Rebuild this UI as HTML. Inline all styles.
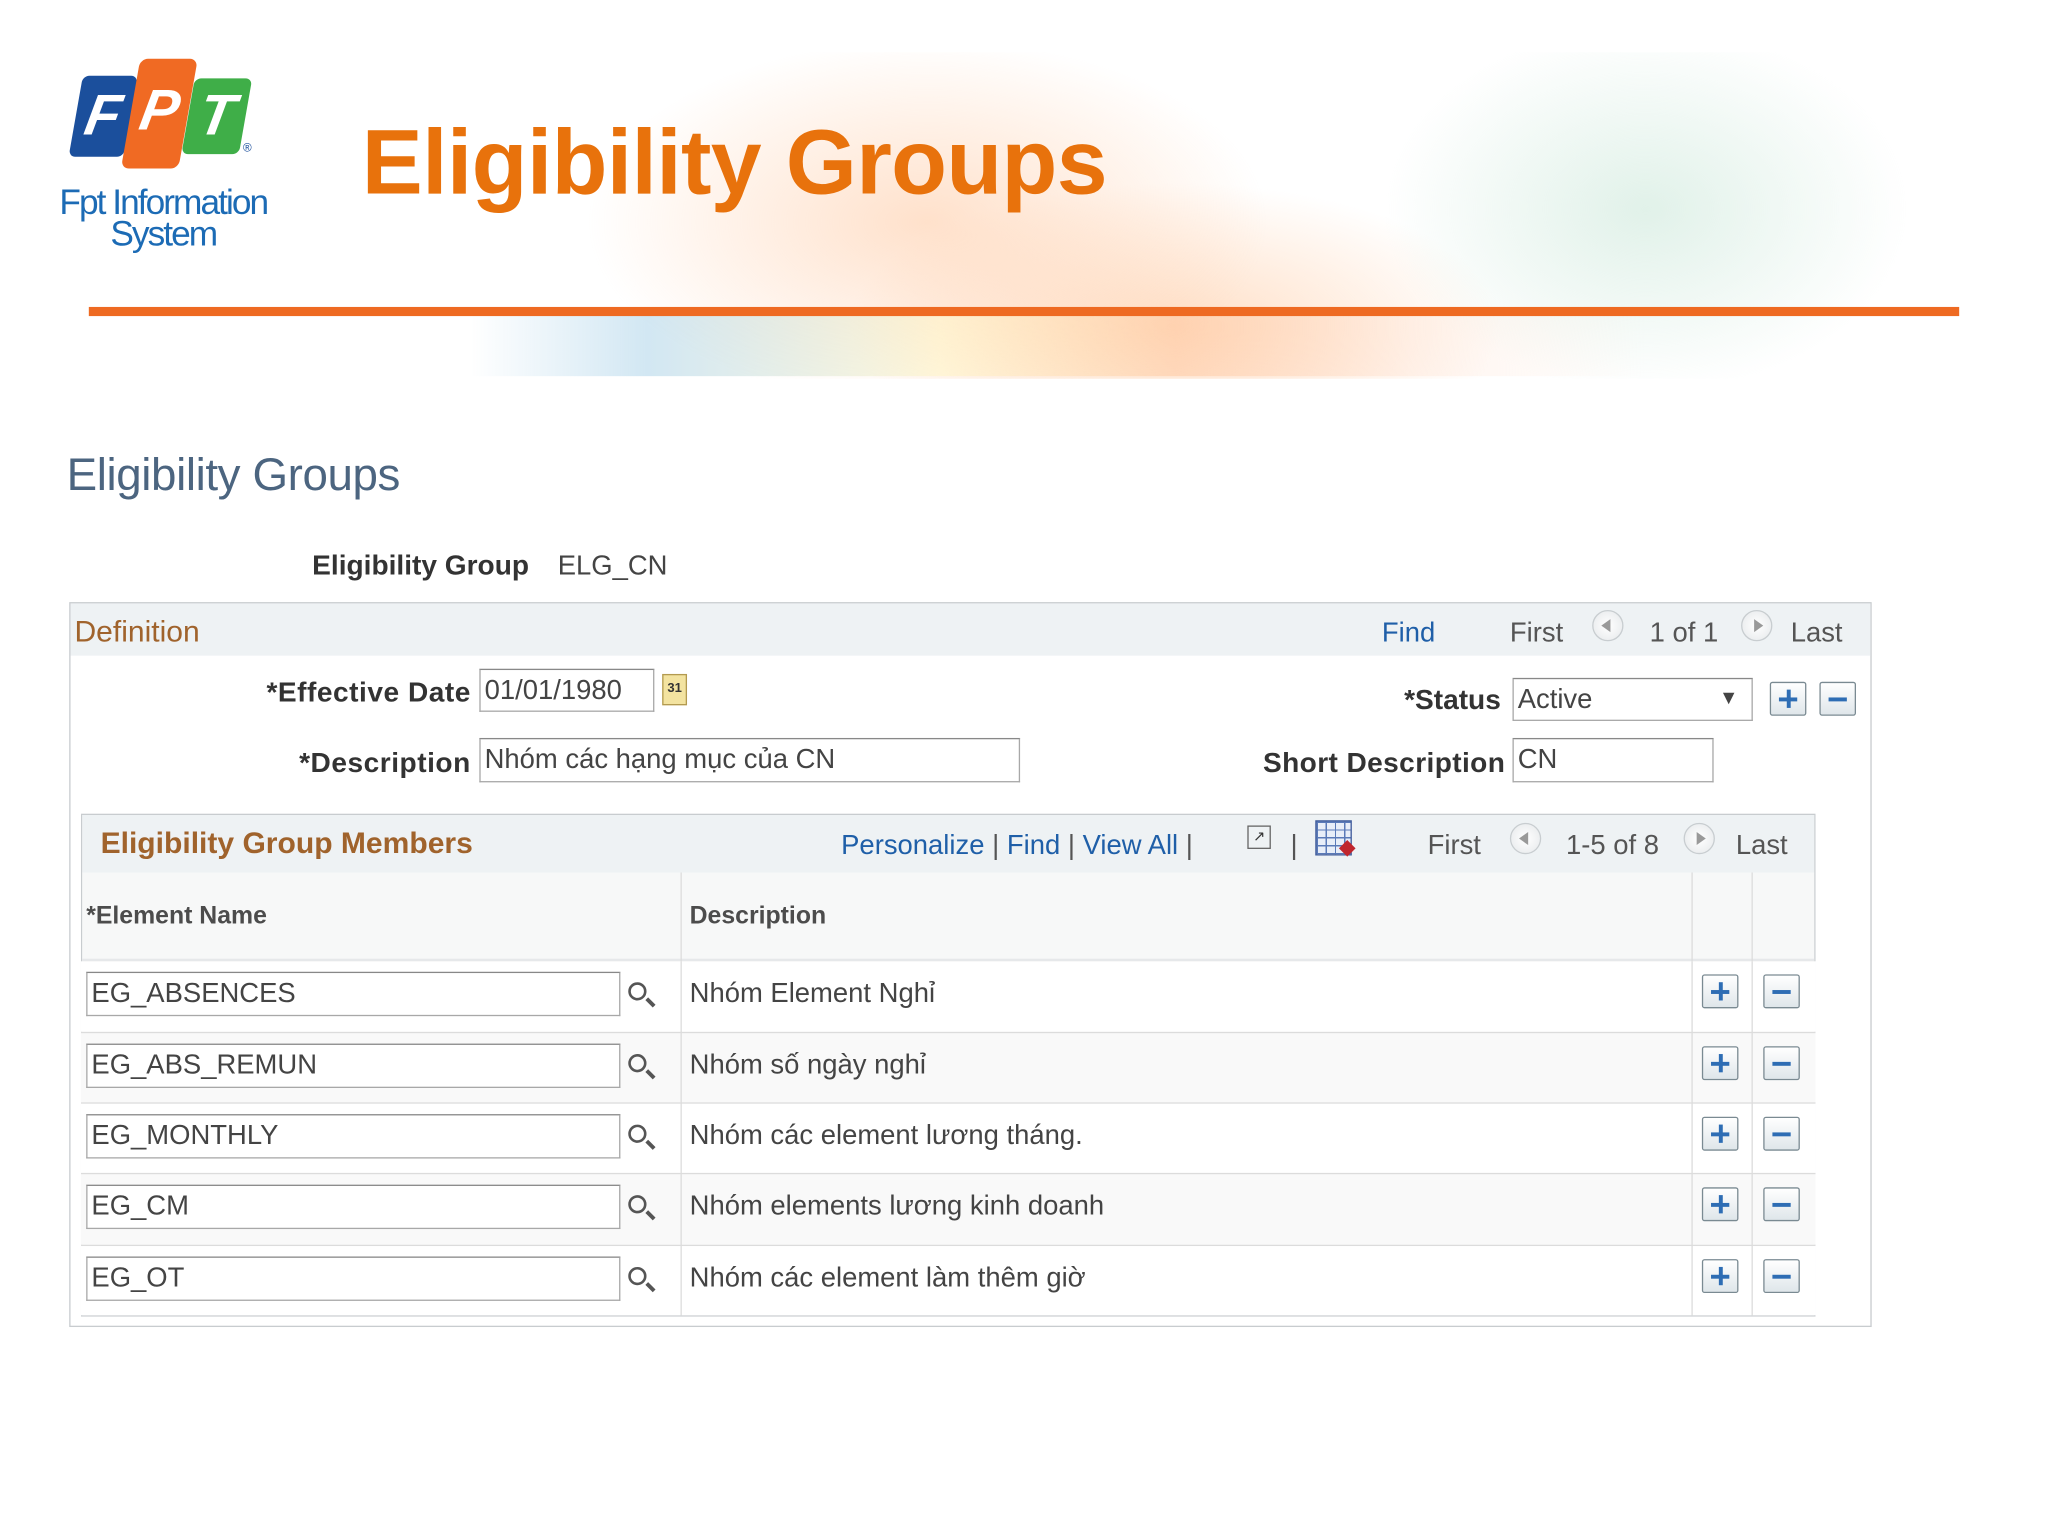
<!DOCTYPE html>
<html><head><meta charset="utf-8"><style>
html,body{margin:0;padding:0;background:#fff;width:2048px;height:1536px;overflow:hidden}
#s{position:absolute;left:0;top:0;width:1568px;height:1176px;transform:scale(1.306122);transform-origin:0 0;font-family:"Liberation Sans",Arial,sans-serif;color:#333}
.a{position:absolute;white-space:nowrap}
.lbl{font-weight:bold;font-size:21.5px;color:#333}
.inp{position:absolute;border:1px solid #a8a8a8;border-top-color:#888;background:#fff;font-size:21px;color:#444;box-sizing:border-box;padding:1px 3px;line-height:30px;white-space:nowrap}
.lnk{color:#1f5fa8;font-size:21px}
.gr{color:#555;font-size:21px}
.btn{position:absolute;width:28px;height:26px;box-sizing:border-box;border:1px solid #7a8a92;border-radius:2px;background:linear-gradient(#fff,#dfe6ea)}
.btn:before{content:"";position:absolute;left:6px;right:6px;top:11px;height:3px;background:#2e6db4}
.btn.p:after{content:"";position:absolute;top:5px;bottom:5px;left:12px;width:3px;background:#2e6db4}
.circ{position:absolute;width:24px;height:24px;border-radius:50%;border:1px solid #c8cdd0;background:radial-gradient(#fff,#e5e8ea);box-sizing:border-box}
.circ i{position:absolute;top:6px;width:0;height:0;border-top:5px solid transparent;border-bottom:5px solid transparent}
.row{position:absolute;left:62px;width:1328px;height:54px;border-top:1px solid #dcdcdc}
.mag{position:absolute;width:14px;height:14px;border:2.5px solid #555;border-radius:50%;box-sizing:border-box}
.mag:after{content:"";position:absolute;left:11px;top:12px;width:8px;height:3px;background:#555;transform:rotate(45deg)}
.rt{position:absolute;left:466px;top:13px;font-size:21px;color:#444}
</style></head><body><div id="s">
<div class="a" style="left:380px;top:40px;width:1100px;height:250px;background:radial-gradient(ellipse 260px 140px at 330px 130px,rgba(255,200,160,.55),transparent),radial-gradient(ellipse 200px 140px at 880px 120px,rgba(200,230,215,.55),transparent),radial-gradient(ellipse 250px 110px at 520px 210px,rgba(255,190,140,.5),transparent);"></div>
<div class="a" style="left:360px;top:240px;width:900px;height:48px;background:linear-gradient(90deg,rgba(190,220,240,.0),rgba(180,215,235,.6) 15%,rgba(255,245,200,.6) 40%,rgba(255,200,160,.55) 60%,rgba(255,220,200,.3) 80%,transparent)"></div>
<div class="a" style="left:58px;top:58px;width:42px;height:62px;background:#1b4f9c;transform:skewX(-10deg);border-radius:5px;color:#fff;font:italic bold 44px 'Liberation Sans';text-align:center;line-height:62px">F</div>
<div class="a" style="left:100px;top:45px;width:44px;height:84px;background:#f06a23;transform:skewX(-10deg);border-radius:6px;color:#fff;font:italic bold 44px 'Liberation Sans';text-align:center;line-height:80px">P</div>
<div class="a" style="left:144px;top:60px;width:44px;height:58px;background:#3fae48;transform:skewX(-10deg);border-radius:5px;color:#fff;font:italic bold 44px 'Liberation Sans';text-align:center;line-height:58px">T</div>
<div class="a" style="left:186px;top:108px;font-size:9px;color:#1b4f9c">®</div>
<div class="a" style="left:41px;top:143px;font-size:27px;color:#1c6bb5;letter-spacing:-1.5px;line-height:24px;text-align:center;width:168px">Fpt Information<br>System</div>
<div class="a" style="left:277px;top:84px;font-weight:bold;font-size:70px;color:#e8720c;letter-spacing:-.5px">Eligibility Groups</div>
<div class="a" style="left:68px;top:235px;width:1432px;height:7px;background:#ee6a22"></div>
<div class="a" style="left:51px;top:344px;font-size:35px;color:#4c6580;letter-spacing:-.3px">Eligibility Groups</div>
<div class="a lbl" style="left:239px;top:421px">Eligibility Group</div>
<div class="a" style="left:427px;top:422px;font-size:21px;color:#444">ELG_CN</div>
<div class="a" style="left:53px;top:461px;width:1380px;height:555px;border:1px solid #c8cccf;box-sizing:border-box"></div>
<div class="a" style="left:54px;top:462px;width:1378px;height:40px;background:#eef2f4"></div>
<div class="a" style="left:57px;top:470px;font-size:23px;color:#a0632c">Definition</div>
<div class="a lnk" style="left:1058px;top:473px">Find</div>
<div class="a gr" style="left:1156px;top:473px">First</div>
<div class="circ" style="left:1219px;top:467px"><i style="left:6px;border-right:7px solid #999"></i></div>
<div class="a gr" style="left:1263px;top:473px">1 of 1</div>
<div class="circ" style="left:1333px;top:467px"><i style="left:9px;border-left:7px solid #999"></i></div>
<div class="a gr" style="left:1371px;top:473px">Last</div>
<div class="a lbl" style="left:204px;top:518px;letter-spacing:.4px">*Effective Date</div>
<div class="inp" style="left:367px;top:512px;width:134px;height:33px">01/01/1980</div>
<div class="a" style="left:507px;top:516px;width:19px;height:24px;background:#f3e3a0;border:1px solid #b39a50;box-sizing:border-box;font-size:10px;text-align:center;line-height:22px;font-weight:bold">31</div>
<div class="a lbl" style="left:1075px;top:524px">*Status</div>
<div class="inp" style="left:1158px;top:519px;width:184px;height:33px">Active<span style="position:absolute;right:10px;top:0;font-size:15px">▼</span></div>
<div class="btn p" style="left:1355px;top:522px"></div>
<div class="btn" style="left:1393px;top:522px"></div>
<div class="a lbl" style="left:229px;top:572px;letter-spacing:.4px">*Description</div>
<div class="inp" style="left:367px;top:565px;width:414px;height:34px">Nhóm các hạng mục của CN</div>
<div class="a lbl" style="left:967px;top:572px;letter-spacing:.3px">Short Description</div>
<div class="inp" style="left:1158px;top:565px;width:154px;height:34px">CN</div>
<div class="a" style="left:62px;top:623px;width:1328px;height:385px;border:1px solid #c8cccf;box-sizing:border-box"></div>
<div class="a" style="left:63px;top:624px;width:1326px;height:44px;background:#eef2f4;border-bottom:1px solid #dcdcdc"></div>
<div class="a" style="left:77px;top:632px;font-size:23px;font-weight:bold;color:#a0632c">Eligibility Group Members</div>
<div class="a lnk" style="left:644px;top:636px">Personalize <span style="color:#555">|</span> Find <span style="color:#555">|</span> View All <span style="color:#555">|</span></div>
<div class="a" style="left:955px;top:632px;width:18px;height:18px;border:1px solid #666;box-sizing:border-box;font-size:11px;text-align:center;line-height:16px;color:#333">↗</div>
<div class="a gr" style="left:988px;top:636px">|</div>
<div class="a" style="left:1007px;top:628px;width:28px;height:27px;background:repeating-linear-gradient(90deg,#5a7ab8 0 1px,transparent 1px 7px),repeating-linear-gradient(#5a7ab8 0 1px,#e8eef8 1px 6px);border:1px solid #3d5a9a;box-sizing:border-box"></div>
<div class="a" style="left:1027px;top:645px;width:9px;height:9px;background:#c0262d;transform:rotate(45deg)"></div>
<div class="a gr" style="left:1093px;top:636px">First</div>
<div class="circ" style="left:1156px;top:630px"><i style="left:6px;border-right:7px solid #999"></i></div>
<div class="a gr" style="left:1199px;top:636px">1-5 of 8</div>
<div class="circ" style="left:1289px;top:630px"><i style="left:9px;border-left:7px solid #999"></i></div>
<div class="a gr" style="left:1329px;top:636px">Last</div>
<div class="a" style="left:63px;top:668px;width:1326px;height:66px;background:#f7f8f8;border-bottom:3px solid #e6e8ea"></div>
<div class="a" style="left:66px;top:691px;font-size:19px;font-weight:bold;color:#4c4c4c">*Element Name</div>
<div class="a" style="left:528px;top:691px;font-size:19px;font-weight:bold;color:#4c4c4c">Description</div>
<div class="a" style="left:521px;top:668px;width:1px;height:339px;background:#dcdcdc"></div>
<div class="a" style="left:1295px;top:668px;width:1px;height:339px;background:#dcdcdc"></div>
<div class="a" style="left:1341px;top:668px;width:1px;height:339px;background:#dcdcdc"></div>

<div class="row" style="top:736px;background:#fff;border-top:none"><div class="inp" style="left:4px;top:8px;width:409px;height:34px">EG_ABSENCES</div><div class="mag" style="left:419px;top:16px"></div><div class="rt">Nhóm Element Nghỉ</div><div class="btn p" style="left:1241px;top:10px"></div><div class="btn" style="left:1288px;top:10px"></div></div>
<div class="row" style="top:790px;background:#f9f9f9"><div class="inp" style="left:4px;top:8px;width:409px;height:34px">EG_ABS_REMUN</div><div class="mag" style="left:419px;top:16px"></div><div class="rt">Nhóm số ngày nghỉ</div><div class="btn p" style="left:1241px;top:10px"></div><div class="btn" style="left:1288px;top:10px"></div></div>
<div class="row" style="top:844px;background:#fff"><div class="inp" style="left:4px;top:8px;width:409px;height:34px">EG_MONTHLY</div><div class="mag" style="left:419px;top:16px"></div><div class="rt">Nhóm các element lương tháng.</div><div class="btn p" style="left:1241px;top:10px"></div><div class="btn" style="left:1288px;top:10px"></div></div>
<div class="row" style="top:898px;background:#f9f9f9"><div class="inp" style="left:4px;top:8px;width:409px;height:34px">EG_CM</div><div class="mag" style="left:419px;top:16px"></div><div class="rt">Nhóm elements lương kinh doanh</div><div class="btn p" style="left:1241px;top:10px"></div><div class="btn" style="left:1288px;top:10px"></div></div>
<div class="row" style="top:953px;background:#fff;height:53px"><div class="inp" style="left:4px;top:8px;width:409px;height:34px">EG_OT</div><div class="mag" style="left:419px;top:16px"></div><div class="rt">Nhóm các element làm thêm giờ</div><div class="btn p" style="left:1241px;top:10px"></div><div class="btn" style="left:1288px;top:10px"></div></div>
<div class="a" style="left:521px;top:736px;width:1px;height:271px;background:#dcdcdc"></div>
<div class="a" style="left:1295px;top:736px;width:1px;height:271px;background:#dcdcdc"></div>
<div class="a" style="left:1341px;top:736px;width:1px;height:271px;background:#dcdcdc"></div>
</div></body></html>
